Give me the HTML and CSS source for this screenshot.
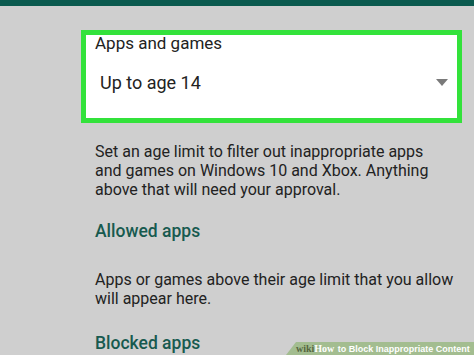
FILE: index.html
```html
<!DOCTYPE html>
<html lang="en">
<head>
    <meta charset="UTF-8">
    <meta name="viewport" content="width=device-width, initial-scale=1.0">
    <title>Apps and games</title>
    <link rel="stylesheet" href="styles.css">
</head>
<body>
    <div class="topbar"></div>
    <div class="content">
        <div class="select-box">
            <div class="select-label">Apps and games</div>
            <div class="select-row">
                <span class="select-value">Up to age 14</span>
                <span class="caret"></span>
            </div>
        </div>
        <p class="desc first">Set an age limit to filter out inappropriate apps and games on Windows 10 and Xbox. Anything above that will need your approval.</p>
        <h3 class="section-title">Allowed apps</h3>
        <p class="desc second">Apps or games above their age limit that you allow will appear here.</p>
        <h3 class="section-title last">Blocked apps</h3>
    </div>
    <div class="watermark">
        <span class="wm-wiki">wiki</span><span class="wm-how">How</span> to Block Inappropriate Content
    </div>
</body>
</html>
```

FILE: styles.css
```css
body {
    margin: 0;
    background-color: #cfcfcf;
    font-family: Roboto, "Liberation Sans", sans-serif;
    color: #222;
    height: 355px;
    overflow: hidden;
    position: relative;
}
.topbar {
    height: 6px;
    background-color: #0b5a4f;
}
.content {
    padding-left: 81px;
}
.select-box {
    margin-top: 24px;
    width: 371px;
    height: 83px;
    border: 5px solid #33e23b;
    background-color: #fff;
}
.select-label {
    font-size: 17px;
    line-height: 16px;
    padding-left: 9px;
}
.select-row {
    display: flex;
    align-items: center;
    justify-content: space-between;
    margin-top: 20px;
    padding-left: 14px;
    padding-right: 9px;
}
.select-value {
    font-size: 18px;
    line-height: 24px;
}
.caret {
    width: 0;
    height: 0;
    border-left: 6.5px solid transparent;
    border-right: 6.5px solid transparent;
    border-top: 7px solid #7a7a7a;
    margin-top: -2px;
}
.desc {
    margin: 0;
    padding-left: 14px;
    width: 358px;
    font-size: 16px;
    line-height: 19px;
}
.desc.first {
    margin-top: 19px;
}
.section-title {
    margin: 20px 0 0;
    padding-left: 14px;
    font-size: 17.5px;
    line-height: 24px;
    font-weight: 500;
    color: #175a4f;
}
.desc.second {
    margin-top: 27px;
    width: 370px;
}
.section-title.last {
    margin-top: 23px;
}
.watermark {
    position: absolute;
    right: 0;
    bottom: 0;
    width: 178px;
    height: 13px;
    padding-left: 10px;
    background-color: #a3bd90;
    clip-path: polygon(10px 0, 100% 0, 100% 100%, 0 100%);
    font-family: "Liberation Sans", sans-serif;
    font-size: 9px;
    line-height: 13px;
    font-weight: bold;
    color: #fff;
    white-space: nowrap;
}
.wm-wiki {
    font-family: "Liberation Serif", serif;
    font-size: 10px;
    color: #56663f;
}
.wm-how {
    font-family: "Liberation Serif", serif;
    font-size: 10px;
    margin-right: 1px;
}
```
